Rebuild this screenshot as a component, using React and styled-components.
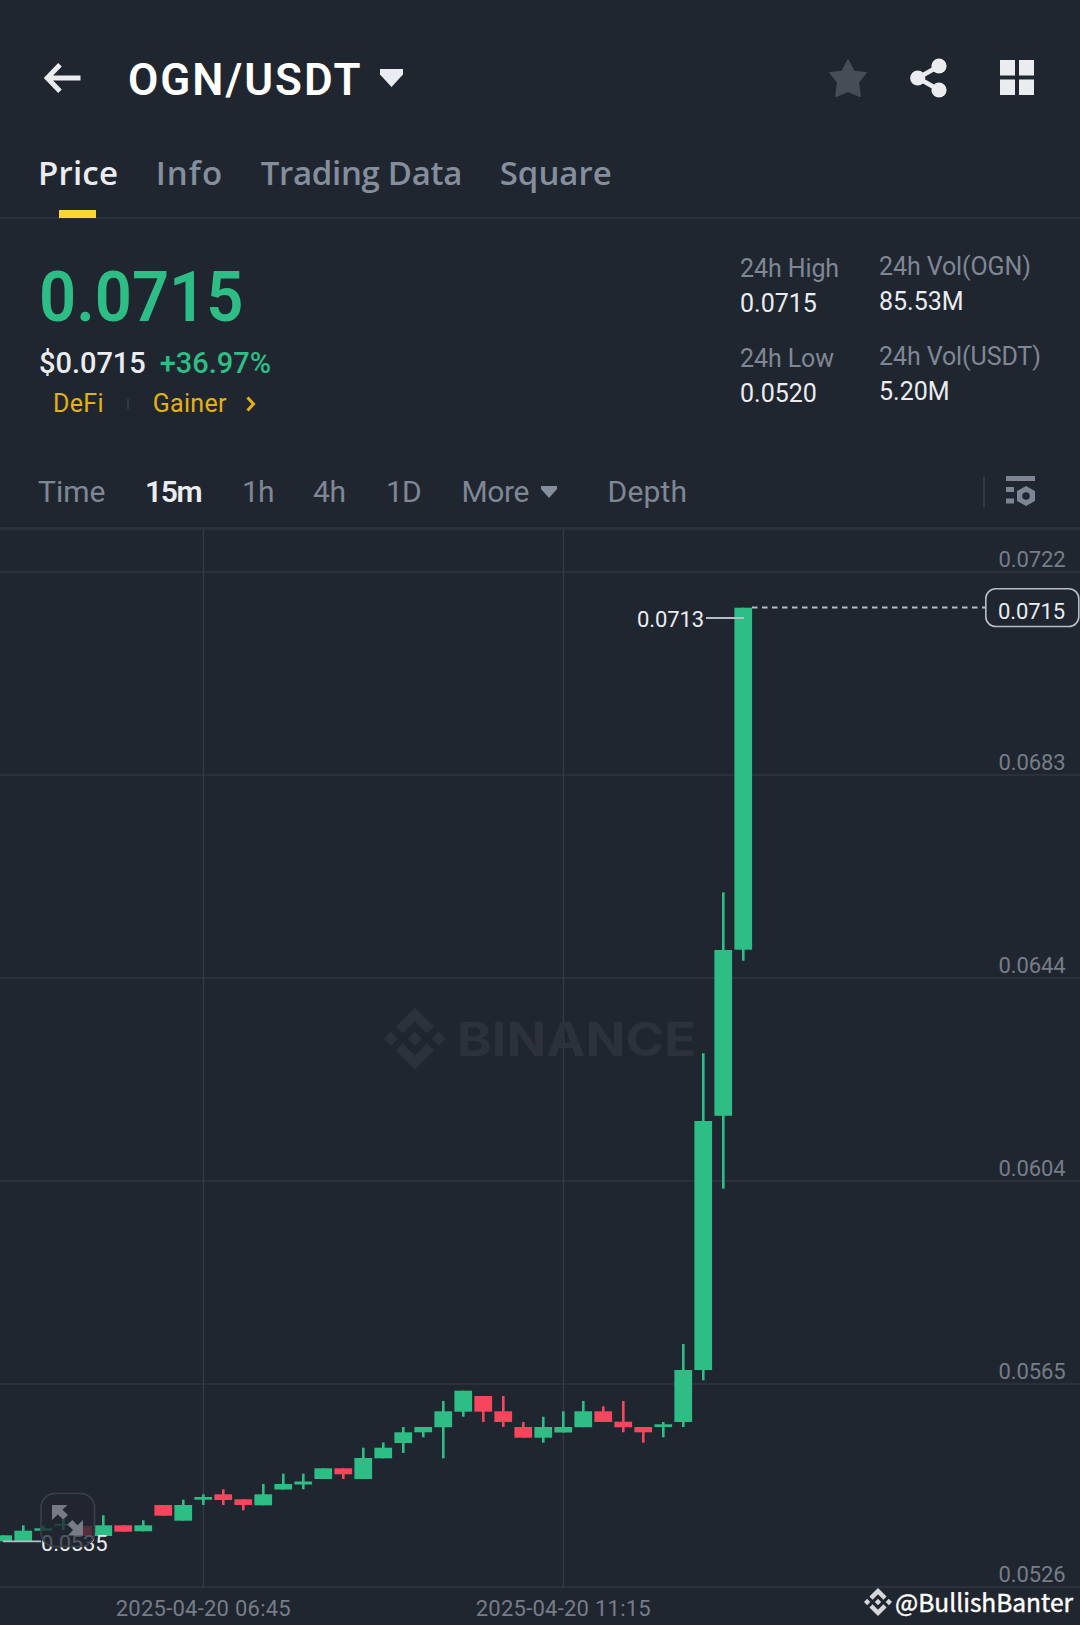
import React from 'react';
import styled, { createGlobalStyle } from "styled-components";
import { SiBinance } from "react-icons/si";

const UP = "#2ebd85";
const DOWN = "#f6465d";

const tabs = [
  { label: "Price", spacing: 0.2, active: true },
  { label: "Info", spacing: 1.1 },
  { label: "Trading Data", spacing: -0.3 },
  { label: "Square", spacing: 0 },
];

const intervals = [
  { label: "Time", width: 107 },
  { label: "15m", width: 97, spacing: -1.4, active: true },
  { label: "1h", width: 71, spacing: -0.8 },
  { label: "4h", width: 73, spacing: -0.3 },
  { label: "1D", width: 75.5, spacing: -0.8 },
  { label: "More", width: 146, spacing: -0.4, caret: true },
  { label: "Depth", width: 100, spacing: 0.2 },
];

const gridRows = [
  { y: 42, label: "0.0722" },
  { y: 245, label: "0.0683" },
  { y: 448, label: "0.0644" },
  { y: 651, label: "0.0604" },
  { y: 854, label: "0.0565" },
  { y: 1057, label: "0.0526" },
];

const gridCols = [
  { x: 203, label: "2025-04-20 06:45" },
  { x: 563, label: "2025-04-20 11:15" },
];

// [direction, body top, body bottom, wick top, wick bottom], one every 20px
const candles = [
  [1, 1535.3, 1541.3],
  [1, 1530.7, 1541.3, 1525.3],
  [1, 1528.3, 1530.7, 1525.5, 1531],
  [1, 1524, 1525.7, 1519.5, 1530],
  [0, 1526, 1536],
  [1, 1525.3, 1536, 1515.3],
  [0, 1525.3, 1531.7],
  [1, 1525.3, 1531.3, 1520.3],
  [0, 1505, 1515.7],
  [1, 1505, 1520.7, 1499.7],
  [1, 1497, 1499.7, 1494.3, 1505],
  [0, 1494.3, 1500, 1489.3, 1505],
  [0, 1499.3, 1505, 1499.3, 1510.3],
  [1, 1494.3, 1505.3, 1484],
  [1, 1484, 1489.5, 1473.7],
  [1, 1481.5, 1484.5, 1473.7, 1489.3],
  [1, 1468.3, 1479],
  [0, 1468.3, 1474.3, 1468.3, 1479],
  [1, 1458, 1479, 1447.7],
  [1, 1447.7, 1458.3, 1442.5],
  [1, 1432.3, 1443, 1427, 1453],
  [1, 1427, 1432.3, 1427, 1437.3],
  [1, 1411.3, 1427.2, 1401, 1458.3],
  [1, 1390.7, 1411.7, 1390.7, 1416.7],
  [0, 1396, 1411.7, 1396, 1422],
  [0, 1411.3, 1422, 1396, 1427],
  [0, 1427, 1437.7, 1422],
  [1, 1427, 1437.7, 1416.7, 1442.7],
  [1, 1427, 1432.5, 1411.3],
  [1, 1411.3, 1427.2, 1401],
  [0, 1411.3, 1422, 1406.3],
  [0, 1421.7, 1427.3, 1401, 1432.3],
  [0, 1427, 1432.3, 1427, 1442.7],
  [1, 1424.3, 1427, 1422, 1437.3],
  [1, 1370, 1422, 1344, 1427],
  [1, 1121, 1370, 1053.3, 1380.3],
  [1, 950, 1115.8, 892.3, 1188.7],
  [1, 607.7, 949.7, 607.7, 960.7],
];

function Candles() {
  return candles.map(([up, top, bottom, high = top, low = bottom], i) => {
    const x = 3.3 + i * 20;
    return (
      <g key={i} fill={up ? UP : DOWN} transform="translate(0 -530)">
        <rect x={x - 8.9} y={top} width={17.7} height={bottom - top} />
        <rect x={x - 1.3} y={high} width={2.6} height={low - high} />
      </g>
    );
  });
}

export default function App() {
  return (
    <Screen>
      <GlobalStyle />
      <Header>
        <BackIcon viewBox="0 0 37 30">
          <path d="M36.5 15H4M16 1.8L3.2 15L16 28.2" />
        </BackIcon>
        <Pair>OGN/USDT</Pair>
        <Caret $width={23} $height={18} viewBox="0 0 23 18">
          <path d="M0 0H23V5.5L11.5 18L0 5.5Z" />
        </Caret>
        <Actions>
          <svg width="38" height="40" viewBox="0 0 38 40">
            <path
              d="M19 2L25 13.5L37 14.8L29.4 24L31 38.2L19 33.2L7 38.2L8.6 24L1 14.8L13 13.5Z"
              fill="#474d57" stroke="#474d57" strokeWidth="1.5" strokeLinejoin="round"
            />
          </svg>
          <svg width="37" height="40" viewBox="0 0 37 40" fill="#eaecef">
            <path d="M29 8L8 20L29 32" fill="none" stroke="#eaecef" strokeWidth="4.6" />
            <circle cx="29" cy="8" r="7.6" />
            <circle cx="7.7" cy="20" r="7.6" />
            <circle cx="29" cy="32" r="7.6" />
          </svg>
          <svg width="34" height="35" viewBox="0 0 34 35" fill="#eaecef">
            <path d="M0 0H15V15.5H0ZM19 0H34V15.5H19ZM0 19.5H15V35H0ZM19 19.5H34V35H19Z" />
          </svg>
        </Actions>
      </Header>
      <Tabs>
        {tabs.map(({ label, spacing, active }) => (
          <Tab key={label} $spacing={spacing} $active={active}>{label}</Tab>
        ))}
      </Tabs>
      <Ticker>
        <div>
          <LastPrice>0.0715</LastPrice>
          <FiatRow>
            $0.0715 <Change>+36.97%</Change>
          </FiatRow>
          <Tags>
            <span>DeFi</span>
            <TagDivider />
            <span>Gainer</span>
            <svg width="10" height="16" viewBox="0 0 10 16">
              <path d="M1.5 1.5L7.5 8L1.5 14.5" fill="none" stroke="#e6b112" strokeWidth="3" />
            </svg>
          </Tags>
        </div>
        <Stats>
          <StatColumn $top={2}>
            <Stat><dt>24h High</dt><dd>0.0715</dd></Stat>
            <Stat><dt>24h Low</dt><dd>0.0520</dd></Stat>
          </StatColumn>
          <StatColumn $top={0}>
            <Stat><dt>24h Vol(OGN)</dt><dd>85.53M</dd></Stat>
            <Stat><dt>24h Vol(USDT)</dt><dd>5.20M</dd></Stat>
          </StatColumn>
        </Stats>
      </Ticker>
      <Intervals>
        {intervals.map(({ label, width, spacing = 0, active, caret }) => (
          <Interval key={label} $width={width} $spacing={spacing} $active={active}>
            {label}
            {caret && (
              <Caret $width={16} $height={12} $muted viewBox="0 0 16 12">
                <path d="M0 0H16V3L8 12L0 3Z" />
              </Caret>
            )}
          </Interval>
        ))}
        <Settings>
          <svg width="30" height="32" viewBox="0 0 30 32" fill="#7d8592">
            <path d="M0 0H29V5H0ZM0 11H8V16H0ZM0 22.5H8V27.5H0Z" />
            <path
              fillRule="evenodd"
              d="M20 10L29 15V25L20 30L11 25V15ZM20 16.2A3.8 3.8 0 1 0 20 23.8A3.8 3.8 0 1 0 20 16.2Z"
            />
          </svg>
        </Settings>
      </Intervals>
      <ChartArea>
        <Chart viewBox="0 0 1080 1095">
          {gridRows.map((row) => (
            <rect key={row.y} x="0" y={row.y - 1} width="1080" height="2" fill="#2b313c" />
          ))}
          {gridCols.map((col) => (
            <rect key={col.x} x={col.x - 0.3} y="0" width="1.4" height="1058" fill="#343a45" />
          ))}
          <SiBinance x="384" y="477.5" size={62} color="#2c313c" />
          <Brand x="457" y="525.5" textLength="239" lengthAdjust="spacingAndGlyphs">BINANCE</Brand>
          <Candles />
          {gridRows.map((row) => (
            <Label key={row.label} x="998.5" y={row.y - 5.5} textLength="67">{row.label}</Label>
          ))}
          {gridCols.map((col) => (
            <Label key={col.label} x={col.x - 87.3} y="1085.5" textLength="175">{col.label}</Label>
          ))}
          <path d="M752 77.5H985" stroke="#b7bdc6" strokeWidth="1.8" strokeDasharray="5.5 4.5" />
          <rect x="985.8" y="58.7" width="93" height="37.8" rx="10" fill="#202630" stroke="#b7bdc6" strokeWidth="1.6" />
          <Label $bright x="998" y="88.6" textLength="67">0.0715</Label>
          <Label $bright x="637" y="96.5" textLength="67">0.0713</Label>
          <path d="M706 88H744M3 1011.3H41" stroke="#b7bdc6" strokeWidth="1.8" />
          <Label $bright x="41" y="1020.5" textLength="66.5">0.0535</Label>
          <rect x="41" y="963.5" width="53.5" height="53" rx="14" fill="#202630" fillOpacity="0.75" stroke="#3a3f4a" strokeWidth="1.6" />
          <path
            d="M52 975H67.5L62.4 979.8L68 985L63.2 989.6L57.8 984.4L52 990ZM67.5 994.6L72.3 990L77.5 995.2L83 990V1005.5H67.8L73 999.9Z"
            fill="#767b86"
          />
        </Chart>
        <Credit>
          <SiBinance size={28} color="#d5d7da" />
          @BullishBanter
        </Credit>
      </ChartArea>
    </Screen>
  );
}

const GlobalStyle = createGlobalStyle`
  body {
    margin: 0;
    background: #202630;
  }
`;

const Screen = styled.div`
  box-sizing: border-box;
  width: 1080px;
  height: 1625px;
  overflow: hidden;
  background: #202630;
  color: #eaecef;
  font-family: Roboto, sans-serif;
`;

const Header = styled.header`
  box-sizing: border-box;
  display: flex;
  align-items: center;
  height: 156px;
  padding: 0 46px 1px 44px;
`;

const BackIcon = styled.svg`
  width: 37px;
  height: 30px;
  path {
    fill: none;
    stroke: #eaecef;
    stroke-width: 5;
  }
`;

const Pair = styled.h1`
  margin: 4px 18px 0 47px;
  color: #fff;
  font-size: 44px;
  font-weight: 600;
  letter-spacing: 2px;
  line-height: 52px;
`;

const Caret = styled.svg`
  flex: none;
  width: ${({ $width }) => $width}px;
  height: ${({ $height }) => $height}px;
  fill: ${({ $muted }) => ($muted ? "#848e9c" : "#eaecef")};
`;

const Actions = styled.div`
  display: flex;
  align-items: center;
  margin-left: auto;
  gap: 53px;
  svg:first-child {
    margin-right: -10px;
  }
`;

const Tabs = styled.nav`
  box-sizing: border-box;
  display: flex;
  height: 63px;
  padding-left: 38px;
  gap: 37.5px;
  border-bottom: 2px solid #2b313c;
  font-family: "Open Sans", sans-serif;
`;

const Tab = styled.span`
  height: 61px;
  color: ${({ $active }) => ($active ? "#eaecef" : "#848e9c")};
  font-size: 33px;
  font-weight: 600;
  letter-spacing: ${({ $spacing }) => $spacing}px;
  line-height: 34px;
  &::after {
    content: "";
    display: ${({ $active }) => ($active ? "block" : "none")};
    width: 37px;
    height: 8px;
    margin: 20px 0 0 21px;
    background: #fcd535;
  }
`;

const Ticker = styled.section`
  display: flex;
  justify-content: space-between;
  box-sizing: border-box;
  height: 246px;
  padding: 35px 0 0 39px;
`;

const LastPrice = styled.div`
  margin-top: 2px;
  color: ${UP};
  font-size: 70px;
  font-weight: 600;
  line-height: 82px;
  transform: scaleX(0.93);
  transform-origin: left;
`;

const FiatRow = styled.div`
  margin-top: 7px;
  font-size: 30px;
  font-weight: 500;
  line-height: 36px;
  transform: scaleX(0.965);
  transform-origin: left;
`;

const Change = styled.span`
  margin-left: 7px;
  color: ${UP};
`;

const Tags = styled.div`
  display: flex;
  align-items: center;
  margin: 8px 0 0 14px;
  color: #e6b112;
  font-size: 25px;
  letter-spacing: 0.3px;
  line-height: 30px;
  svg {
    margin-left: 19px;
  }
`;

const TagDivider = styled.i`
  width: 2px;
  height: 10px;
  margin: 0 24px 0 23px;
  background: #343a45;
`;

const Stats = styled.div`
  display: flex;
`;

const StatColumn = styled.dl`
  width: ${({ $top }) => ($top ? 139 : 201)}px;
  margin: ${({ $top }) => $top}px 0 0;
`;

const Stat = styled.div`
  height: 90px;
  font-size: 25px;
  line-height: 26px;
  dt {
    color: #7f8794;
    letter-spacing: -0.1px;
  }
  dd {
    margin: 9px 0 0;
  }
`;

const Intervals = styled.div`
  box-sizing: border-box;
  display: flex;
  align-items: center;
  height: 65px;
  padding: 0 44px 9px 38px;
  border-bottom: 3px solid #2b313c;
`;

const Interval = styled.span`
  display: flex;
  align-items: center;
  gap: 12px;
  width: ${({ $width }) => $width}px;
  color: ${({ $active }) => ($active ? "#eaecef" : "#7f8794")};
  font-size: 30px;
  font-weight: ${({ $active }) => ($active ? 600 : 400)};
  letter-spacing: ${({ $spacing }) => $spacing}px;
`;

const Settings = styled.div`
  display: flex;
  align-items: center;
  height: 30px;
  margin-left: auto;
  padding-left: 21px;
  border-left: 2px solid #343a45;
`;

const ChartArea = styled.main`
  position: relative;
  height: 1095px;
`;

const Chart = styled.svg`
  display: block;
  width: 1080px;
  height: 1095px;
`;

const Label = styled.text`
  fill: ${({ $bright }) => ($bright ? "#eaecef" : "#767d89")};
  font-size: 22px;
`;

const Brand = styled.text`
  fill: #2c313c;
  font-family: Inter, sans-serif;
  font-size: 46px;
  font-weight: 700;
`;

const Credit = styled.div`
  position: absolute;
  right: 7px;
  bottom: 10px;
  display: flex;
  align-items: center;
  gap: 3px;
  height: 28px;
  color: #fff;
  font-family: "Noto Sans CJK SC", sans-serif;
  font-size: 24.5px;
  font-weight: 400;
  line-height: 25px;
  -webkit-text-stroke: 0.4px #fff;
  svg {
    margin-top: 1px;
  }
`;
